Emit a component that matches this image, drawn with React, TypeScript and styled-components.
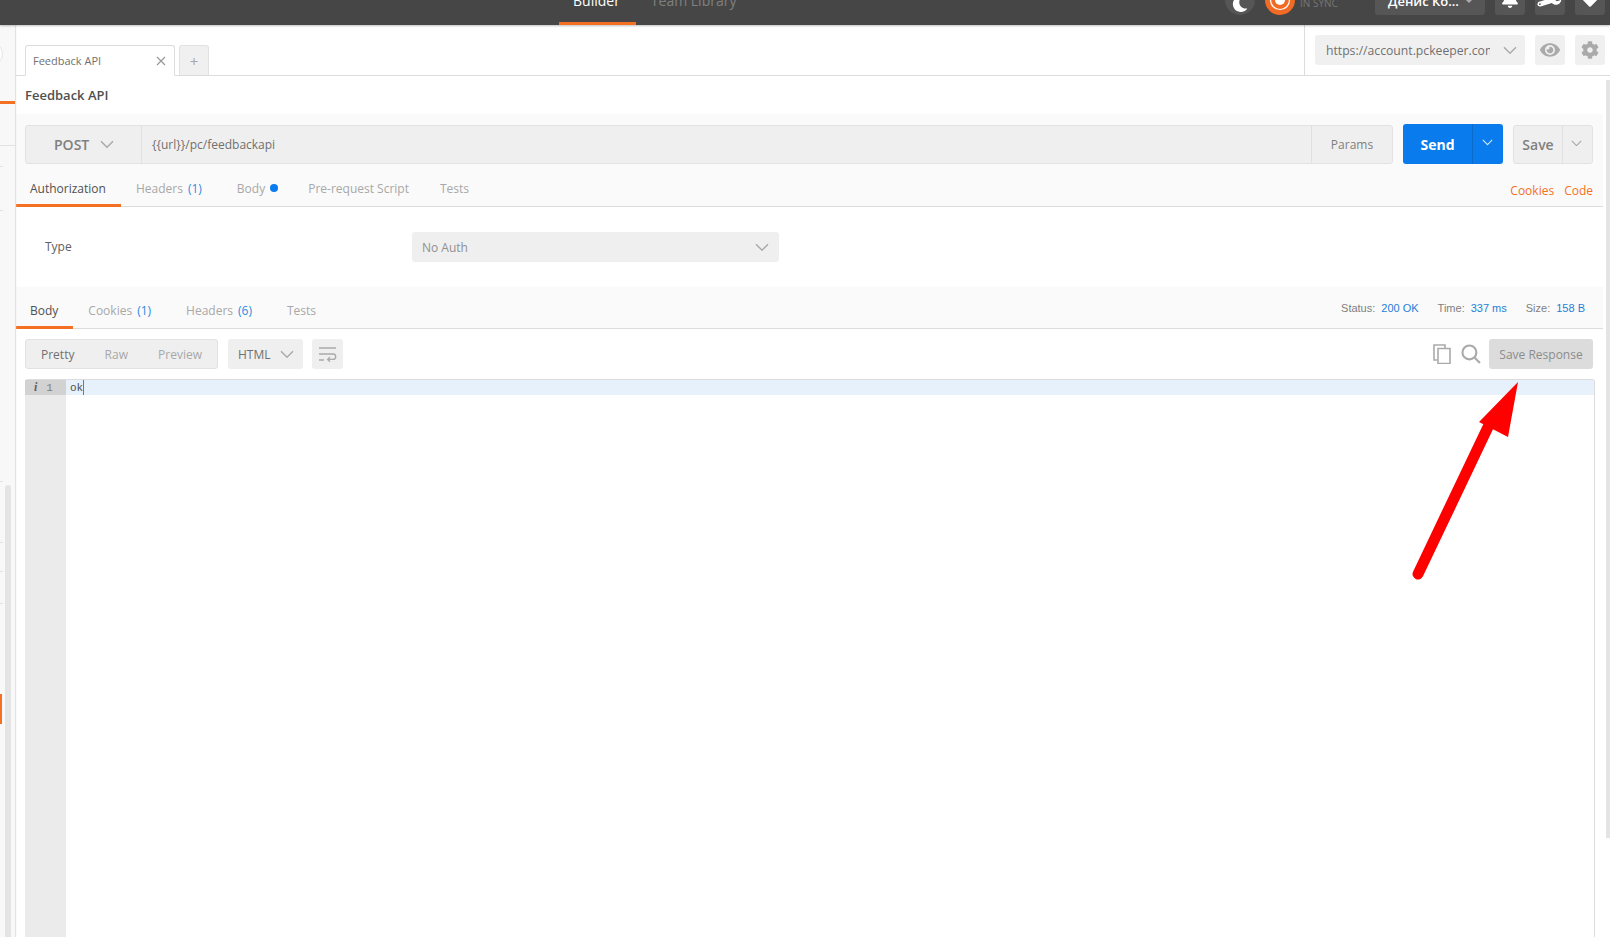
// App.tsx
import styled, { createGlobalStyle } from 'styled-components'
import { FaBell, FaCog, FaEye, FaHeart, FaMoon, FaWrench } from 'react-icons/fa'

const GlobalStyle = createGlobalStyle`
  html, body {
    margin: 0;
    padding: 0;
    background: #fff;
    overflow: hidden;
  }
  * {
    box-sizing: border-box;
  }
`

const Page = styled.div`
  position: relative;
  width: 1610px;
  height: 937px;
  overflow: hidden;
  display: flex;
  flex-direction: column;
  font-family: "Open Sans", "Noto Sans", sans-serif;
  font-size: 12px;
  color: #808080;
`

const Header = styled.header`
  position: relative;
  z-index: 3;
  flex: 0 0 25px;
  height: 25px;
  display: flex;
  align-items: flex-end;
  padding: 0 5px 0 559px;
  background: #464646;
  box-shadow: 0 1px 2px rgba(0, 0, 0, 0.25);
`

const NavTab = styled.div<{ $active?: boolean }>`
  flex: 0 0 auto;
  height: 34px;
  margin-right: 1px;
  line-height: 20px;
  font-size: 14px;
  color: ${p => (p.$active ? '#fff' : '#808080')};
  padding: 0 16px 0 14px;
  border-bottom: 3px solid ${p => (p.$active ? '#f47023' : 'transparent')};
`

const HeaderRight = styled.div`
  margin-left: auto;
  display: flex;
  align-items: flex-end;
  padding-bottom: 10px;
`

const RoundButton = styled.div`
  width: 30px;
  height: 30px;
  border-radius: 50%;
  background: #565656;
  color: #fff;
  display: flex;
  align-items: flex-end;
  justify-content: center;
  padding-bottom: 3px;
  font-size: 16px;
`

const SyncBadge = styled.div`
  width: 30px;
  height: 30px;
  margin-left: 10px;
  border-radius: 50%;
  background: #f26b25;
  display: flex;
  align-items: center;
  justify-content: center;
`

const SyncText = styled.div`
  width: 75px;
  margin-left: 5px;
  font-size: 10px;
  line-height: 10px;
  padding-bottom: 11px;
  color: #767676;
  transform: translateY(4px);
`

const UserButton = styled.div`
  width: 110px;
  height: 30px;
  border-radius: 3px;
  background: #565656;
  color: #fff;
  font-size: 13px;
  font-weight: 600;
  display: flex;
  align-items: flex-end;
  justify-content: space-between;
  padding: 0 13px 5px 13px;
  line-height: 18px;
`

const Caret = styled.span`
  width: 0;
  height: 0;
  margin-bottom: 7px;
  border-left: 3px solid transparent;
  border-right: 3px solid transparent;
  border-top: 3px solid #aaa;
`

const HeaderIcon = styled.div<{ $lift?: number }>`
  width: 30px;
  height: 30px;
  margin-left: 10px;
  border-radius: 3px;
  background: #565656;
  color: #fff;
  display: flex;
  align-items: flex-end;
  justify-content: center;
  padding-bottom: ${p => p.$lift ?? 7}px;
  font-size: 18px;
`

const Wrench = styled(FaWrench)`
  font-size: 20px;
  transform: rotate(28deg);
`

const Shell = styled.div`
  flex: 1;
  min-height: 0;
  display: flex;
`

const Sidebar = styled.aside`
  position: relative;
  z-index: 2;
  flex: 0 0 15px;
  background: #f8f8f8;
  box-shadow: 1px 0 1px #e2e2e2;
  overflow: hidden;
`

const SideRows = styled.div`
  display: flex;
  flex-direction: column;
`

const SideCircle = styled.div`
  width: 24px;
  height: 24px;
  margin: 17px 0 0 -21px;
  border: 1px solid #e4e4e4;
  border-radius: 50%;
  background: #fff;
`

const SideActive = styled.div`
  margin-top: 35px;
  height: 3px;
  background: #f47023;
`

const SideRule = styled.div<{ $gap: number; $short?: boolean }>`
  margin-top: ${p => p.$gap}px;
  width: ${p => (p.$short ? '3px' : '100%')};
  height: 1px;
  background: #e2e2e2;
`

const SideMark = styled.div<{ $gap: number }>`
  margin-top: ${p => p.$gap}px;
  width: 2px;
  height: 30px;
  background: #f47023;
`

const SideScroll = styled.div`
  position: absolute;
  left: 5px;
  top: 460px;
  bottom: 0;
  width: 6px;
  background: #e4e4e4;
  border-radius: 3px 3px 0 0;
`

const Main = styled.main`
  flex: 1;
  min-width: 0;
  display: flex;
  flex-direction: column;
`

const TabBar = styled.div`
  flex: 0 0 51px;
  display: flex;
  align-items: flex-end;
  padding-left: 10px;
  border-bottom: 1px solid #dcdcdc;
`

const RequestTab = styled.div`
  width: 150px;
  height: 31px;
  margin-bottom: -1px;
  padding: 0 8px 0 7px;
  display: flex;
  align-items: center;
  justify-content: space-between;
  background: #fff;
  border: 1px solid #dcdcdc;
  border-bottom-color: #fff;
  border-radius: 3px 3px 0 0;
  font-size: 11px;
  color: #707070;
`

const AddTab = styled.div`
  width: 30px;
  height: 30px;
  margin-left: 4px;
  display: flex;
  align-items: center;
  justify-content: center;
  background: #f0f0f0;
  border: 1px solid #e2e2e2;
  border-bottom: none;
  border-radius: 3px 3px 0 0;
  font-size: 15px;
  color: #a8a8a8;
`

const EnvArea = styled.div`
  margin-left: auto;
  align-self: stretch;
  width: 306px;
  padding: 10px 5px 0 10px;
  display: flex;
  gap: 10px;
  border-left: 1px solid #dcdcdc;
`

const EnvSelect = styled.div`
  width: 210px;
  height: 30px;
  padding: 0 8px 0 11px;
  display: flex;
  align-items: center;
  justify-content: space-between;
  background: #f0f0f0;
  border-radius: 3px;
  font-size: 12.2px;
  color: #707070;
`

const EnvName = styled.span`
  width: 164px;
  overflow: hidden;
  white-space: nowrap;
`

const EnvButton = styled.div`
  width: 30px;
  height: 30px;
  display: flex;
  align-items: center;
  justify-content: center;
  background: #f0f0f0;
  border-radius: 3px;
  color: #aaa;
`

const Body = styled.div`
  flex: 1;
  min-height: 0;
  display: flex;
`

const Content = styled.div`
  flex: 0 0 1588px;
  display: flex;
  flex-direction: column;
`

const PageScroll = styled.div`
  width: 4px;
  height: 758px;
  margin: 4px 0 0 3px;
  background: #e4e4e4;
`

const Title = styled.div`
  flex: 0 0 38px;
  padding-left: 10px;
  line-height: 38px;
  font-size: 13px;
  font-weight: 600;
  color: #505050;
`

const RequestArea = styled.div`
  background: #fafafa;
`

const RequestRow = styled.div`
  display: flex;
  padding: 10px 10px 0;
  height: 50px;
`

const UrlGroup = styled.div`
  flex: 1;
  height: 39px;
  margin-top: 1px;
  display: flex;
  background: #efefef;
  border: 1px solid #e2e2e2;
  border-radius: 3px;
`

const MethodSelect = styled.div`
  flex: 0 0 116px;
  padding-left: 28px;
  display: flex;
  align-items: center;
  gap: 11px;
  border-right: 1px solid #e0e0e0;
  font-size: 14px;
  font-weight: 600;
  color: #808080;
`

const UrlInput = styled.div`
  flex: 1;
  padding-left: 10px;
  display: flex;
  align-items: center;
  font-size: 12px;
  color: #707070;
`

const ParamsButton = styled.div`
  flex: 0 0 81px;
  display: flex;
  align-items: center;
  justify-content: center;
  border-left: 1px solid #e0e0e0;
  color: #808080;
`

const SendButton = styled.div`
  flex: 0 0 100px;
  height: 40px;
  margin-left: 10px;
  display: flex;
  background: #097bed;
  border-radius: 3px;
  color: #fff;
  font-size: 14px;
  font-weight: 700;
`

const SendLabel = styled.div`
  flex: 0 0 69px;
  display: flex;
  align-items: center;
  justify-content: center;
`

const SendCaret = styled.div`
  flex: 1;
  padding: 0 2px 3px 0;
  display: flex;
  align-items: center;
  justify-content: center;
  border-left: 1px solid #0a6bcb;
`

const SaveButton = styled.div`
  flex: 0 0 80px;
  height: 39px;
  margin: 1px 0 0 10px;
  display: flex;
  background: #efefef;
  border: 1px solid #e2e2e2;
  border-radius: 3px;
  font-size: 14px;
  font-weight: 600;
  color: #808080;
`

const SaveLabel = styled.div`
  flex: 0 0 48px;
  display: flex;
  align-items: center;
  justify-content: center;
`

const SaveCaret = styled.div`
  flex: 1;
  padding: 0 2px 3px 0;
  display: flex;
  align-items: center;
  justify-content: center;
  border-left: 1px solid #e0e0e0;
`

const TabRow = styled.div<{ $height: number }>`
  flex: 0 0 ${p => p.$height}px;
  height: ${p => p.$height}px;
  display: flex;
  align-items: stretch;
  background: #fafafa;
  border-bottom: 1px solid #dcdcdc;
`

const TabItem = styled.div<{ $active?: boolean; $gap?: number }>`
  margin-bottom: -1px;
  margin-right: ${p => p.$gap ?? 0}px;
  padding: 8px 15px 0;
  display: flex;
  align-items: center;
  gap: 5px;
  border-bottom: 3px solid ${p => (p.$active ? '#f47023' : 'transparent')};
  color: ${p => (p.$active ? '#505050' : '#a8a8a8')};
`

const Count = styled.span`
  color: #2d8ae0;
`

const BlueDot = styled.span`
  width: 8px;
  height: 8px;
  border-radius: 50%;
  background: #097bed;
`

const TabLinks = styled.div`
  margin-left: auto;
  padding: 11px 10px 0 0;
  display: flex;
  align-items: center;
  gap: 10px;
  color: #f47023;
`

const AuthRow = styled.div`
  flex: 0 0 80px;
  display: flex;
  align-items: center;
  padding: 0 0 0 30px;
`

const AuthLabel = styled.div`
  flex: 0 0 367px;
  margin-top: -2px;
  color: #606060;
`

const AuthSelect = styled.div`
  width: 367px;
  height: 30px;
  padding: 0 10px;
  display: flex;
  align-items: center;
  justify-content: space-between;
  background: #efefef;
  border-radius: 3px;
  color: #909090;
`

const Meta = styled.div`
  margin-left: auto;
  padding: 0 18px 0 0;
  display: flex;
  align-items: center;
  gap: 19px;
  font-family: "Liberation Sans", Arial, sans-serif;
  font-size: 11px;
  color: #808080;
`

const MetaValue = styled.span`
  margin-left: 6px;
  color: #1f7fd8;
`

const Toolbar = styled.div`
  flex: 0 0 50px;
  padding: 10px 10px 0;
  display: flex;
  align-items: flex-start;
`

const ModeGroup = styled.div`
  width: 193px;
  height: 30px;
  padding: 0 15px;
  display: flex;
  align-items: center;
  justify-content: space-between;
  background: #efefef;
  border: 1px solid #e2e2e2;
  border-radius: 3px;
`

const Mode = styled.span<{ $active?: boolean }>`
  color: ${p => (p.$active ? '#707070' : '#a8a8a8')};
`

const LangSelect = styled.div`
  width: 75px;
  height: 30px;
  margin-left: 10px;
  padding: 0 9px 0 10px;
  display: flex;
  align-items: center;
  justify-content: space-between;
  background: #efefef;
  border-radius: 3px;
  color: #707070;
`

const WrapButton = styled.div`
  width: 31px;
  height: 30px;
  margin-left: 9px;
  padding-left: 1px;
  display: flex;
  align-items: center;
  justify-content: center;
  background: #efefef;
  border-radius: 3px;
`

const ToolIcons = styled.div`
  margin-left: auto;
  height: 30px;
  display: flex;
  align-items: center;
  gap: 10px;
`

const SaveResponse = styled.div`
  width: 104px;
  height: 30px;
  margin-left: -2px;
  display: flex;
  align-items: center;
  justify-content: center;
  background: #dcdcdc;
  border-radius: 3px;
  color: #8c8c8c;
`

const Editor = styled.div`
  flex: 1;
  margin: 0 8px 0 10px;
  display: flex;
  border: 1px solid #dcdcdc;
  border-width: 1px 1px 0 0;
  border-radius: 3px 3px 0 0;
  font-family: "Liberation Mono", monospace;
  font-size: 11px;
`

const Gutter = styled.div`
  flex: 0 0 41px;
  background: #ebebeb;
`

const GutterLine = styled.div`
  height: 15px;
  padding-left: 9px;
  display: flex;
  align-items: center;
  gap: 9px;
  background: #d2d2d2;
  color: #808080;
`

const InfoMark = styled.span`
  font-family: "Liberation Serif", serif;
  font-style: italic;
  font-weight: 700;
  font-size: 12px;
  color: #606060;
`

const Code = styled.div`
  flex: 1;
`

const CodeLine = styled.div`
  height: 15px;
  padding-left: 4px;
  display: flex;
  align-items: center;
  background: #e6f1fc;
  color: #505050;
`

const Cursor = styled.span`
  width: 1px;
  height: 15px;
  background: #6b7a8c;
`

const Arrow = styled.svg`
  position: absolute;
  left: 1410px;
  top: 375px;
`

const Chevron = ({ size = 14, color = '#a8a8a8' }: { size?: number; color?: string }) => (
  <svg width={size} height={size * 0.6} viewBox="0 0 14 8" fill="none">
    <path d="M1 1l6 6 6-6" stroke={color} strokeWidth="1.4" />
  </svg>
)

export default function App() {
  return (
    <Page>
      <GlobalStyle />
      <Header>
        <NavTab $active>Builder</NavTab>
        <NavTab>Team Library</NavTab>
        <HeaderRight>
          <RoundButton><FaMoon /></RoundButton>
          <SyncBadge>
            <svg width="24" height="24" viewBox="0 0 24 24" fill="none">
              <circle cx="12" cy="12" r="9.5" stroke="#fff" strokeWidth="1.2" />
              <circle cx="12" cy="12" r="5" fill="#fff" />
            </svg>
          </SyncBadge>
          <SyncText>IN SYNC</SyncText>
          <UserButton>Денис Ко...<Caret /></UserButton>
          <HeaderIcon><FaBell /></HeaderIcon>
          <HeaderIcon $lift={4}><Wrench /></HeaderIcon>
          <HeaderIcon><FaHeart /></HeaderIcon>
        </HeaderRight>
      </Header>
      <Shell>
        <Sidebar>
          <SideRows>
            <SideCircle />
            <SideActive />
            <SideRule $gap={41} />
            <SideRule $gap={20} $short />
            <SideRule $gap={43} $short />
            <SideRule $gap={270} $short />
            <SideRule $gap={60} $short />
            <SideRule $gap={28} $short />
            <SideRule $gap={31} $short />
            <SideMark $gap={90} />
          </SideRows>
          <SideScroll />
        </Sidebar>
        <Main>
          <TabBar>
            <RequestTab>
              Feedback API
              <svg width="10" height="10" viewBox="0 0 10 10">
                <path d="M1 1l8 8M9 1l-8 8" stroke="#999" strokeWidth="1.2" />
              </svg>
            </RequestTab>
            <AddTab>+</AddTab>
            <EnvArea>
              <EnvSelect>
                <EnvName>https://account.pckeeper.com</EnvName>
                <Chevron />
              </EnvSelect>
              <EnvButton><FaEye size={20} /></EnvButton>
              <EnvButton><FaCog size={18} /></EnvButton>
            </EnvArea>
          </TabBar>
          <Body>
            <Content>
              <Title>Feedback API</Title>
              <RequestArea>
                <RequestRow>
                  <UrlGroup>
                    <MethodSelect>POST <Chevron /></MethodSelect>
                    <UrlInput>{'{{url}}/pc/feedbackapi'}</UrlInput>
                    <ParamsButton>Params</ParamsButton>
                  </UrlGroup>
                  <SendButton>
                    <SendLabel>Send</SendLabel>
                    <SendCaret><Chevron size={11} color="#cfe5fb" /></SendCaret>
                  </SendButton>
                  <SaveButton>
                    <SaveLabel>Save</SaveLabel>
                    <SaveCaret><Chevron size={11} /></SaveCaret>
                  </SaveButton>
                </RequestRow>
              </RequestArea>
              <TabRow $height={43}>
                <TabItem $active>Authorization</TabItem>
                <TabItem $gap={5}>Headers <Count>(1)</Count></TabItem>
                <TabItem>Body <BlueDot /></TabItem>
                <TabItem $gap={1}>Pre-request Script</TabItem>
                <TabItem>Tests</TabItem>
                <TabLinks><span>Cookies</span><span>Code</span></TabLinks>
              </TabRow>
              <AuthRow>
                <AuthLabel>Type</AuthLabel>
                <AuthSelect>No Auth <Chevron /></AuthSelect>
              </AuthRow>
              <TabRow $height={42}>
                <TabItem $active>Body</TabItem>
                <TabItem $gap={5}>Cookies <Count>(1)</Count></TabItem>
                <TabItem $gap={5}>Headers <Count>(6)</Count></TabItem>
                <TabItem>Tests</TabItem>
                <Meta>
                  <span>Status:<MetaValue>200 OK</MetaValue></span>
                  <span>Time:<MetaValue>337 ms</MetaValue></span>
                  <span>Size:<MetaValue>158 B</MetaValue></span>
                </Meta>
              </TabRow>
              <Toolbar>
                <ModeGroup>
                  <Mode $active>Pretty</Mode>
                  <Mode>Raw</Mode>
                  <Mode>Preview</Mode>
                </ModeGroup>
                <LangSelect>HTML <Chevron /></LangSelect>
                <WrapButton>
                  <svg width="18" height="16" viewBox="0 0 18 16" fill="none" stroke="#aaa" strokeWidth="1.3">
                    <path d="M0 2h17M0 8h14a2.6 2.6 0 0 1 0 5.4H9M11 11l-2.4 2.4L11 15.8M0 14h5" />
                  </svg>
                </WrapButton>
                <ToolIcons>
                  <svg width="18" height="20" viewBox="0 0 18 20" fill="none" stroke="#aaa" strokeWidth="1.6">
                    <path d="M4 16H1V1h11v3" />
                    <path d="M5 4.5h12v15H5z" />
                  </svg>
                  <svg width="20" height="20" viewBox="0 0 19 19" fill="none" stroke="#aaa" strokeWidth="2">
                    <circle cx="8" cy="8" r="6.6" />
                    <path d="M13 13l5 5" />
                  </svg>
                  <SaveResponse>Save Response</SaveResponse>
                </ToolIcons>
              </Toolbar>
              <Editor>
                <Gutter>
                  <GutterLine><InfoMark>i</InfoMark>1</GutterLine>
                </Gutter>
                <Code>
                  <CodeLine>ok<Cursor /></CodeLine>
                </Code>
              </Editor>
            </Content>
            <PageScroll />
          </Body>
        </Main>
      </Shell>
      <Arrow width="120" height="210" viewBox="0 0 120 210">
        <path d="M108 7L69 47 98 62z" fill="#ff0000" />
        <path d="M78 52L8 199" stroke="#ff0000" strokeWidth="11" strokeLinecap="round" />
      </Arrow>
    </Page>
  )
}
